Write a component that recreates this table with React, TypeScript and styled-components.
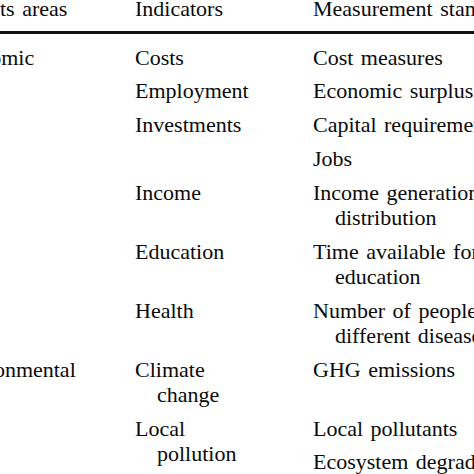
import styled, { createGlobalStyle } from "styled-components";

const GlobalStyle = createGlobalStyle`
  html, body {
    margin: 0;
    padding: 0;
    background: #ffffff;
    overflow: hidden;
  }
  body {
    width: 474px;
    height: 474px;
  }
`;

const Table = styled.table`
  border-collapse: separate;
  border-spacing: 0;
  table-layout: fixed;
  width: 618px;
  margin: -4px 0 0 -55px;
  font-family: "Liberation Serif", "Times New Roman", serif;
  font-size: 22px;
  line-height: 25px;
  word-spacing: 2px;
  color: #0a0a0a;
`;

const HeadCell = styled.th<{ $w: number }>`
  width: ${(p) => p.$w}px;
  box-sizing: border-box;
  padding: 0 0 10px 22px;
  text-indent: -22px;
  text-align: left;
  font-weight: normal;
  white-space: nowrap;
  border-bottom: 3px solid #111;
`;

const Cell = styled.td<{ $first?: boolean; $right?: number }>`
  vertical-align: top;
  text-align: left;
  padding: ${(p) => (p.$first ? "10.5px" : "4.45px")} ${(p) => p.$right ?? 0}px 4.45px 22px;
  text-indent: -22px;
`;

type Row = {
  area?: { text: string; span: number };
  indicator?: { text: string; span: number };
  measure: string;
};

const rows: Row[] = [
  { area: { text: "Economic", span: 7 }, indicator: { text: "Costs", span: 1 }, measure: "Cost measures" },
  { indicator: { text: "Employment", span: 1 }, measure: "Economic surplus" },
  { indicator: { text: "Investments", span: 2 }, measure: "Capital requirements" },
  { measure: "Jobs" },
  { indicator: { text: "Income", span: 1 }, measure: "Income generation and distribution" },
  { indicator: { text: "Education", span: 1 }, measure: "Time available for education" },
  { indicator: { text: "Health", span: 1 }, measure: "Number of people with different diseases" },
  { area: { text: "Environmental", span: 3 }, indicator: { text: "Climate change", span: 1 }, measure: "GHG emissions" },
  { indicator: { text: "Local pollution", span: 2 }, measure: "Local pollutants" },
  { measure: "Ecosystem degradation" },
];

export default function App() {
  return (
    <>
      <GlobalStyle />
      <Table>
        <thead>
          <tr>
            <HeadCell $w={190}>Impacts areas</HeadCell>
            <HeadCell $w={178}>Indicators</HeadCell>
            <HeadCell $w={250}>Measurement standard</HeadCell>
          </tr>
        </thead>
        <tbody>
          {rows.map((row, i) => (
            <tr key={i}>
              {row.area && (
                <Cell $first={i === 0} rowSpan={row.area.span}>
                  {row.area.text}
                </Cell>
              )}
              {row.indicator && (
                <Cell $first={i === 0} $right={53} rowSpan={row.indicator.span}>
                  {row.indicator.text}
                </Cell>
              )}
              <Cell $first={i === 0} $right={18}>
                {row.measure}
              </Cell>
            </tr>
          ))}
        </tbody>
      </Table>
    </>
  );
}
